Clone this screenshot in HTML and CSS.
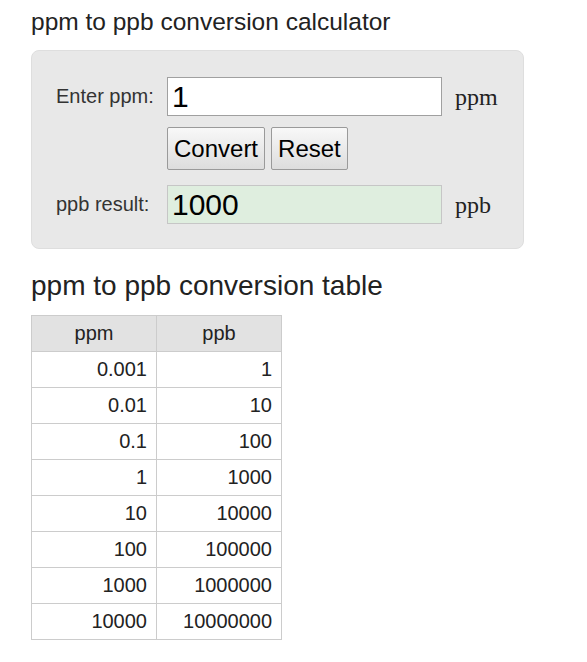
FILE: index.html
```html
<!DOCTYPE html>
<html lang="en">
<head>
  <meta charset="UTF-8">
  <meta name="viewport" content="width=device-width, initial-scale=1">
  <title>ppm to ppb conversion calculator</title>
  <link rel="stylesheet" href="styles.css">
</head>
<body>

  <h1>ppm to ppb conversion calculator</h1>

  <form class="calc" id="calc">
    <label class="calc-label" for="ppm">Enter ppm:</label>
    <input class="calc-input" type="text" id="ppm" value="1">
    <span class="calc-unit">ppm</span>

    <div class="calc-buttons">
      <button type="button" id="convert">Convert</button>
      <button type="reset">Reset</button>
    </div>

    <label class="calc-label" for="ppb">ppb result:</label>
    <input class="calc-input result" type="text" id="ppb" value="1000">
    <span class="calc-unit">ppb</span>
  </form>

  <h2>ppm to ppb conversion table</h2>

  <table class="conv">
    <tr><th>ppm</th><th>ppb</th></tr>
    <tr><td>0.001</td><td>1</td></tr>
    <tr><td>0.01</td><td>10</td></tr>
    <tr><td>0.1</td><td>100</td></tr>
    <tr><td>1</td><td>1000</td></tr>
    <tr><td>10</td><td>10000</td></tr>
    <tr><td>100</td><td>100000</td></tr>
    <tr><td>1000</td><td>1000000</td></tr>
    <tr><td>10000</td><td>10000000</td></tr>
  </table>

  <script>
    document.getElementById('convert').addEventListener('click', function () {
      const ppm = parseFloat(document.getElementById('ppm').value);
      document.getElementById('ppb').value = isNaN(ppm) ? '' : ppm * 1000;
    });
  </script>

</body>
</html>
```

FILE: styles.css
```css
body {
  margin: 0;
  padding: 0 31px;
  font-family: 'Liberation Sans', Arial, sans-serif;
  color: #222;
  background: #fff;
}
h1, h2 {
  font-weight: normal;
  line-height: normal;
}
h1 {
  font-size: 24.5px;
  margin: 8px 0 14px;
}
h2 {
  font-size: 28px;
  margin: 21px 0 13px;
}
.calc {
  box-sizing: border-box;
  width: 493px;
  background: #e8e8e8;
  border: 1px solid #dedede;
  border-radius: 8px;
  padding: 26px 0 24px 24px;
  display: grid;
  grid-template-columns: 111px 275px auto;
  align-items: center;
  margin: 0;
}
.calc-label {
  font-size: 20px;
  color: #333;
}
.calc-input {
  box-sizing: border-box;
  height: 39px;
  width: 275px;
  margin: 0;
  padding: 0 4px;
  font-family: 'Liberation Sans', Arial, sans-serif;
  font-size: 30px;
  color: #000;
  background: #fff;
  border: 1px solid #a0a0a0;
  outline: none;
}
.calc-input.result {
  background: #dfeedf;
  border-color: #c6c6c6;
}
.calc-unit {
  font-family: 'Liberation Serif', 'Times New Roman', serif;
  font-size: 24px;
  color: #222;
  margin-left: 13px;
  padding-top: 2px;
}
.calc-buttons {
  grid-column: 2 / 4;
  display: flex;
  gap: 6px;
  margin: 11px 0 15px;
}
.calc-buttons button {
  height: 43px;
  padding: 0 6px;
  font-family: 'Liberation Sans', Arial, sans-serif;
  font-size: 24px;
  color: #000;
  background: linear-gradient(#f8f8f8, #dddddd);
  border: 1px solid #9a9a9a;
  border-radius: 2px;
}
.calc-buttons button:hover {
  background: linear-gradient(#ffffff, #e6e6e6);
}
.conv {
  border-collapse: collapse;
  font-size: 20px;
  color: #222;
}
.conv th, .conv td {
  width: 106px;
  border: 1px solid #cccccc;
  padding: 6px 9px;
  line-height: 23px;
  text-align: right;
}
.conv th {
  font-weight: normal;
  text-align: center;
  background: #e2e2e2;
}
```
